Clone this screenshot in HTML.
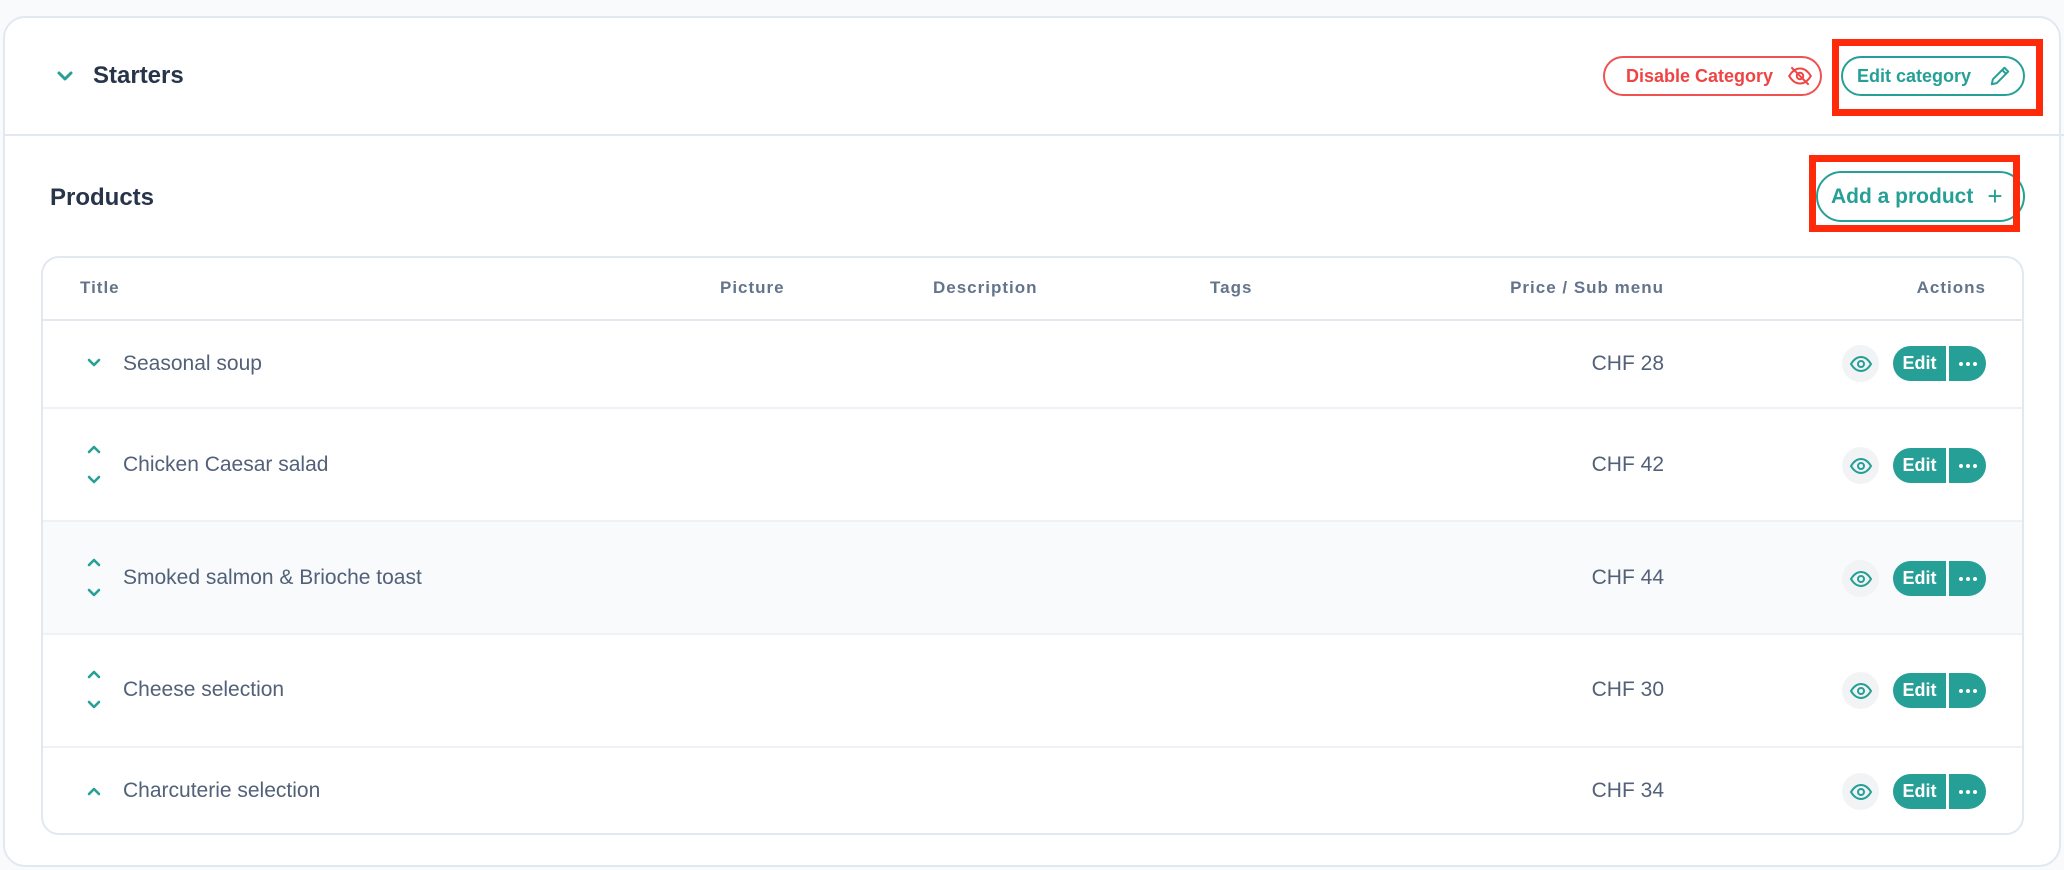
<!DOCTYPE html>
<html><head><meta charset="utf-8"><style>
*{margin:0;padding:0;box-sizing:border-box}
body{width:2064px;height:870px;background:#f8fafc;font-family:"Liberation Sans",sans-serif;position:relative;overflow:hidden}
.a{position:absolute}
.card{left:3px;top:16px;width:2058px;height:851px;background:#fff;border:2px solid #e2e8f0;border-radius:22px}
.hdiv{left:3px;top:134px;width:2061px;height:2px;background:#e2e8f0}
.tbl{left:41px;top:256px;width:1983px;height:579px;border:2px solid #e2e8f0;border-radius:18px;background:#fff;overflow:hidden}
.th{top:278px;font-size:17px;font-weight:bold;color:#64748b;letter-spacing:1px;line-height:20px}
.line{left:43px;width:1979px;height:2px;background:#eef2f6}
.name{left:123px;font-size:21px;color:#526178;line-height:24px}
.price{right:400px;font-size:21px;color:#526178;line-height:24px;text-align:right}
.eye{left:1842px;width:37px;height:37px;border-radius:50%;background:#f1f3f5;display:flex;align-items:center;justify-content:center}
.edit{left:1893px;width:53px;height:35px;background:#26a096;border-radius:18px 0 0 18px;color:#fff;font-weight:bold;font-size:18px;line-height:35px;text-align:center}
.dots{left:1949px;width:37px;height:35px;background:#26a096;border-radius:0 18px 18px 0;display:flex;align-items:center;justify-content:center;gap:3px}
.dots i{width:4px;height:4px;border-radius:50%;background:#fff;display:block}
.pill{border-radius:30px;display:flex;align-items:center;font-weight:bold}
.red{border:3px solid #ff2a0a}
</style></head><body>
<div class="a card"></div>
<div class="a hdiv"></div>
<svg class="a" style="left:56px;top:69px" width="18" height="14" viewBox="0 0 18 14"><path d="M3 4l6 6 6-6" fill="none" stroke="#26a096" stroke-width="3" stroke-linecap="round" stroke-linejoin="round"/></svg>
<div class="a" style="left:93px;top:62px;font-size:24px;font-weight:bold;color:#273449;line-height:28px">Starters</div>

<div class="a pill" style="left:1603px;top:56px;width:219px;height:40px;border:2px solid #f05252;color:#ef4444;font-size:18px;padding-left:21px">Disable Category
<svg style="margin-left:14px" width="26" height="22" viewBox="0 0 24 20"><path d="M2 10c3-5 6.5-7 10-7s7 2 10 7c-3 5-6.5 7-10 7S5 15 2 10z" fill="none" stroke="#ef4444" stroke-width="1.8"/><circle cx="12" cy="10" r="3" fill="none" stroke="#ef4444" stroke-width="1.8"/><path d="M4 2l16 16" stroke="#ef4444" stroke-width="1.8"/></svg></div>
<div class="a pill" style="left:1841px;top:56px;width:184px;height:40px;border:2px solid #26a096;color:#26a096;font-size:18px;padding-left:14px">Edit category
<svg style="margin-left:18px" width="22" height="22" viewBox="0 0 20 20"><path d="M14 2.5l3.5 3.5L7 16.5 2.5 17.5 3.5 13z M12 4.5l3.5 3.5" fill="none" stroke="#26a096" stroke-width="1.8" stroke-linejoin="round"/></svg></div>
<div class="a red" style="left:1832px;top:39px;width:211px;height:77px;border-width:7px"></div>

<div class="a" style="left:50px;top:184px;font-size:24px;font-weight:bold;color:#273449;line-height:28px">Products</div>
<div class="a pill" style="left:1816px;top:171px;width:209px;height:51px;border:2px solid #26a096;color:#26a096;font-size:21px;padding-left:13px">Add a product<span style="margin-left:14px;font-weight:normal;font-size:26px">+</span></div>
<div class="a red" style="left:1809px;top:155px;width:211px;height:77px;border-width:7px"></div>

<div class="a tbl"></div>
<div class="a th" style="left:80px">Title</div>
<div class="a th" style="left:720px">Picture</div>
<div class="a th" style="left:933px">Description</div>
<div class="a th" style="left:1210px">Tags</div>
<div class="a th" style="right:400px">Price / Sub menu</div>
<div class="a th" style="right:78px">Actions</div>
<div class="a line" style="top:319px;background:#e2e8f0"></div>
<div class="a line" style="top:407px"></div>
<div class="a" style="left:43px;top:520px;width:1979px;height:113px;background:#f8fafc"></div>
<div class="a line" style="top:520px"></div>
<div class="a line" style="top:633px"></div>
<div class="a line" style="top:746px"></div>

<svg width="0" height="0" style="position:absolute"><defs>
<symbol id="dn" viewBox="0 0 16 12"><path d="M3 3l5 5 5-5" fill="none" stroke="#26a096" stroke-width="2.6" stroke-linecap="round" stroke-linejoin="round"/></symbol>
<symbol id="up" viewBox="0 0 16 12"><path d="M3 9l5-5 5 5" fill="none" stroke="#26a096" stroke-width="2.6" stroke-linecap="round" stroke-linejoin="round"/></symbol>
<symbol id="eye" viewBox="0 0 24 18"><path d="M2 9c3-5 6.5-7 10-7s7 2 10 7c-3 5-6.5 7-10 7S5 14 2 9z" fill="none" stroke="#26a096" stroke-width="2"/><circle cx="12" cy="9" r="3" fill="none" stroke="#26a096" stroke-width="2"/></symbol>
</defs></svg>

<svg class="a" style="left:86px;top:357px" width="16" height="12"><use href="#dn"/></svg>
<div class="a name" style="top:352px">Seasonal soup</div>
<div class="a price" style="top:352px">CHF 28</div>
<div class="a eye" style="top:345px"><svg width="24" height="18"><use href="#eye"/></svg></div>
<div class="a edit" style="top:346px">Edit</div><div class="a dots" style="top:346px"><i></i><i></i><i></i></div>

<svg class="a" style="left:86px;top:443px" width="16" height="12"><use href="#up"/></svg>
<svg class="a" style="left:86px;top:474px" width="16" height="12"><use href="#dn"/></svg>
<div class="a name" style="top:453px">Chicken Caesar salad</div>
<div class="a price" style="top:453px">CHF 42</div>
<div class="a eye" style="top:447px"><svg width="24" height="18"><use href="#eye"/></svg></div>
<div class="a edit" style="top:448px">Edit</div><div class="a dots" style="top:448px"><i></i><i></i><i></i></div>

<svg class="a" style="left:86px;top:556px" width="16" height="12"><use href="#up"/></svg>
<svg class="a" style="left:86px;top:587px" width="16" height="12"><use href="#dn"/></svg>
<div class="a name" style="top:566px">Smoked salmon &amp; Brioche toast</div>
<div class="a price" style="top:566px">CHF 44</div>
<div class="a eye" style="top:560px"><svg width="24" height="18"><use href="#eye"/></svg></div>
<div class="a edit" style="top:561px">Edit</div><div class="a dots" style="top:561px"><i></i><i></i><i></i></div>

<svg class="a" style="left:86px;top:668px" width="16" height="12"><use href="#up"/></svg>
<svg class="a" style="left:86px;top:699px" width="16" height="12"><use href="#dn"/></svg>
<div class="a name" style="top:678px">Cheese selection</div>
<div class="a price" style="top:678px">CHF 30</div>
<div class="a eye" style="top:672px"><svg width="24" height="18"><use href="#eye"/></svg></div>
<div class="a edit" style="top:673px">Edit</div><div class="a dots" style="top:673px"><i></i><i></i><i></i></div>

<svg class="a" style="left:86px;top:785px" width="16" height="12"><use href="#up"/></svg>
<div class="a name" style="top:779px">Charcuterie selection</div>
<div class="a price" style="top:779px">CHF 34</div>
<div class="a eye" style="top:773px"><svg width="24" height="18"><use href="#eye"/></svg></div>
<div class="a edit" style="top:774px">Edit</div><div class="a dots" style="top:774px"><i></i><i></i><i></i></div>
</body></html>
